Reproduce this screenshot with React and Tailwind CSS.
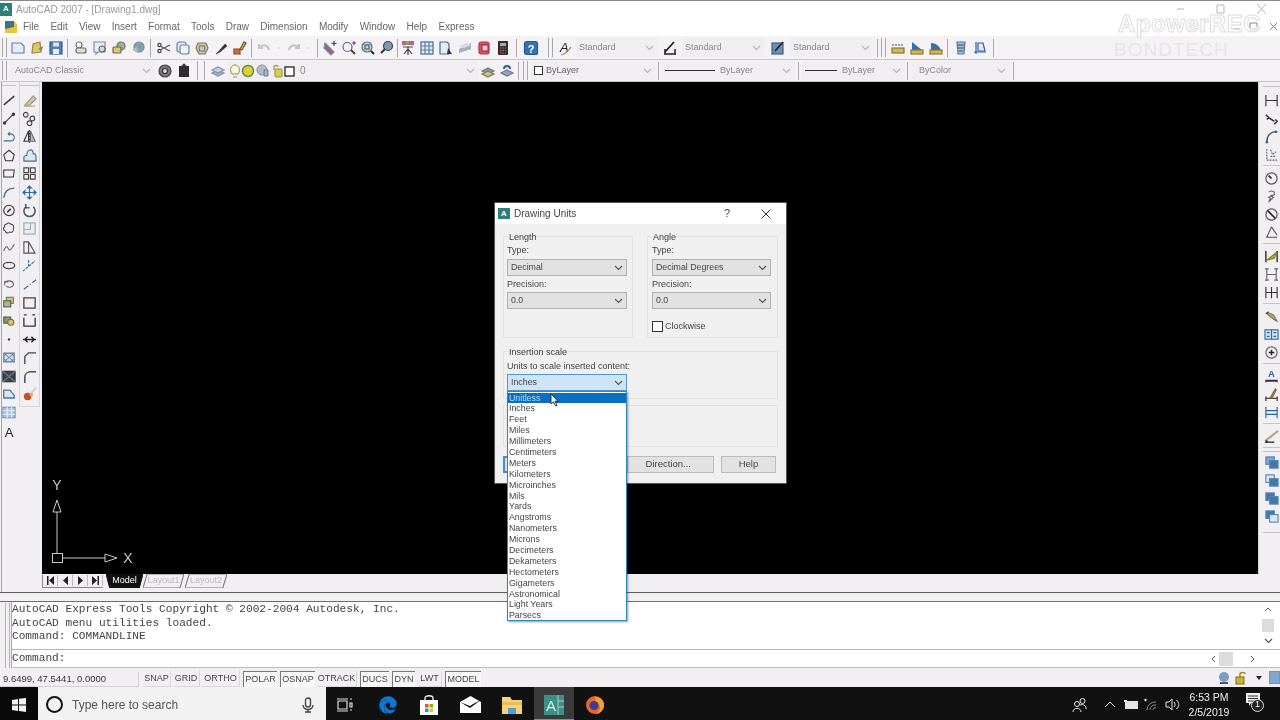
import React from 'react'
import { FaEdge } from 'react-icons/fa'

const Ic = ({ children, size = 16 }) => (
  <svg width={size} height={size} viewBox="0 0 16 16" fill="none" stroke="#444" strokeWidth="1.2">
    {children}
  </svg>
)

// top toolbar
const topA = [
  <path d="M2 3h9l3 3v7H2z" fill="#e4edf6" stroke="#5b83ad" />,
  <><path d="M3 13l1-9 7-2 1 10z" fill="#e2c568" stroke="#9a8a4a" /><path d="M9 9l5-3-1 5z" fill="#6d9a58" stroke="none" /></>,
  <><rect x="2" y="2" width="12" height="12" fill="#4f7fb8" stroke="#36608f" /><rect x="5" y="2.5" width="6" height="4" fill="#dfe8f2" stroke="none" /><rect x="5" y="9" width="6" height="5" fill="#eef" stroke="none" /></>,
]
const topB = [
  <><circle cx="6" cy="5" r="3" stroke="#777" /><rect x="3" y="8" width="10" height="5" rx="2" fill="#ddd" stroke="#666" /></>,
  <><path d="M2 2h11v10H6l-2 2v-2H2z" fill="#e6edf4" stroke="#7b8ea3" /><circle cx="10" cy="9" r="3" fill="#cfd9e3" stroke="#666" /></>,
  <><circle cx="10" cy="6" r="4" fill="#9ab48a" stroke="#6c7a66" /><rect x="2" y="7" width="8" height="6" rx="1" fill="#e2c568" stroke="#666" /></>,
  <><circle cx="9" cy="7" r="5" fill="#7fa3bf" stroke="#7a8a96" /><path d="M2 10l5-3 1 6z" fill="#b8b8b8" stroke="none" /><path d="M8 4l4 2-2 3z" fill="#7da65a" stroke="none" /></>,
]
const topC = [
  <><path d="M2 5l12 6M2 11l12-6" stroke="#555" /><circle cx="3.5" cy="5" r="1.6" fill="#fff" /><circle cx="3.5" cy="11" r="1.6" fill="#fff" /></>,
  <><rect x="2" y="2" width="9" height="10" rx="2" fill="#dfe8f2" stroke="#6184aa" /><rect x="5" y="5" width="9" height="9" rx="2" fill="#edf2f8" stroke="#6184aa" /></>,
  <><path d="M4 3h8l2 5-3 6H5L2 8z" fill="#d9c67c" stroke="#777" /><rect x="5.5" y="6" width="5" height="5" fill="#bcd0df" stroke="#6f8192" /></>,
  <path d="M3 14l3-3 6-7 2 2-7 6z" fill="#333" stroke="#333" strokeWidth=".6" />,
  <><path d="M2 9h6v5H2z" fill="#d76b3a" stroke="#8b4a2b" /><path d="M8 9l4-7 2 1-4 7z" fill="#d9b64c" stroke="#6b5a2a" /></>,
]
const undo = <path d="M13 10c-1-5-6-6-9-3l-1 1m0-4v4h4" stroke="#c4c4c4" strokeWidth="2" />
const redo = <path d="M3 10c1-5 6-6 9-3l1 1m0-4v4H9" stroke="#c4c4c4" strokeWidth="2" />
const dash = <path d="M7 8h2" stroke="#c4c4c4" />
const topD = [
  <><path d="M3 3l9 9-3 3-7-7z" fill="#a35d78" stroke="#7a8fa6" /><path d="M12 1v5M9.5 3.5h5" stroke="#444" /></>,
  <><circle cx="6.5" cy="7" r="4.5" fill="#eef" stroke="#666" /><path d="M10 10l4 4" strokeWidth="2" /><path d="M13 1v4M11 3h4" stroke="#555" /></>,
  <><circle cx="7" cy="7" r="5" fill="#c8d6e3" stroke="#666" /><path d="M11 11l3 3" stroke="#222" strokeWidth="2" /><rect x="5" y="5" width="4" height="4" stroke="#3d5f85" /></>,
  <><circle cx="9" cy="6" r="4.5" fill="#7d9ab5" stroke="#444" /><path d="M6 9l-4 4" stroke="#333" strokeWidth="2" /></>,
]
const topE = [
  <><rect x="2" y="1" width="12" height="4" fill="#c65a9b" stroke="none" /><rect x="6" y="1" width="3" height="4" fill="#7fb04f" stroke="none" /><path d="M3 7h10M8 7v8M4 14l4-5 4 5" stroke="#444" /></>,
  <><rect x="2" y="2" width="12" height="12" fill="#e4ecf3" stroke="#3f6c9b" /><path d="M6 2v12M10 2v12M2 6h12M2 10h12" stroke="#5b7fa3" /></>,
  <><path d="M2 2h7l2 2v10H2z" fill="#e8eef4" stroke="#3f6c9b" /><path d="M10 8l4 6h-5z" fill="#333" stroke="none" /></>,
  <><path d="M2 9l12-6v6l-12 4z" fill="#9fb0bf" stroke="none" /><path d="M2 6l7-3 5 2-7 3z" fill="#d4dbe2" stroke="none" /></>,
  <><rect x="3" y="2" width="10" height="12" rx="2" fill="#d94f63" stroke="#b03a50" /><rect x="6" y="5" width="6" height="6" fill="#f2d5da" stroke="#a33" /></>,
  <><rect x="3" y="1" width="10" height="14" rx="1" fill="#2e2e2e" stroke="none" /><rect x="5" y="3" width="6" height="3" fill="#aaa" stroke="none" /><path d="M5 8h6M5 10.5h6M5 13h6" stroke="#c66" strokeDasharray="1.5 1" /></>,
]
const help = <><rect x="1.5" y="1.5" width="13" height="13" rx="2" fill="#2f73b5" stroke="#255b91" /><text x="8" y="12.5" textAnchor="middle" fontSize="11" fontWeight="700" fill="#fff" stroke="none">?</text></>
const dimIcons = [
  <><path d="M2 5h12" stroke="#445" strokeDasharray="2 1" /><rect x="2" y="8" width="12" height="5" fill="#d7b64f" stroke="#8c7a34" /></>,
  <><path d="M3 10V2l10 8z" fill="#2f73a8" stroke="none" /><rect x="2" y="10" width="12" height="4" fill="#d7b64f" stroke="#8c7a34" /></>,
  <><path d="M3 10V3c5 0 8 3 10 7z" fill="#2f73a8" stroke="none" /><rect x="2" y="10" width="12" height="4" fill="#d7b64f" stroke="#8c7a34" /></>,
]
const dimIcons2 = [
  <><path d="M4 2h8l-1 12H5z" fill="#a8bccf" stroke="#5b7a97" /><path d="M5 5h6M5 8h6M6 11h4" stroke="#33506c" /></>,
  <><path d="M4 14V2M2 12h12" stroke="#2a62a0" /><path d="M6 3h5l2 8H6z" fill="#e4edf6" stroke="#2a62a0" /></>,
]

// draw toolbar, left column
const draw = [
  <path d="M2 13L14 3" stroke="#333" strokeWidth="1.5" />,
  <><path d="M2 14L14 2" stroke="#222" /><circle cx="3" cy="13" r="1.4" fill="#222" /><circle cx="13" cy="3" r="1.4" fill="#222" /></>,
  <path d="M2 13h8c3 0 4-2 4-4s-2-4-4-4H7m2-2L7 5l2 2" stroke="#3f6c9b" />,
  <path d="M8 2l6 5-2 7H4L2 7z" stroke="#333" />,
  <path d="M2 4h12l-1 8H2z" stroke="#333" />,
  <path d="M2 14C3 7 7 3 14 3" stroke="#3f5f80" strokeWidth="1.6" />,
  <><circle cx="8" cy="8" r="6" stroke="#333" /><path d="M6 10l4-4" stroke="#333" strokeWidth="2" /></>,
  <path d="M5 3c2-2 4-1 5 0 3 0 4 3 3 5 1 3-2 5-4 4-2 2-5 1-5-1-3-1-3-4-1-5-1-2 1-3 2-3z" stroke="#444" />,
  <path d="M2 12c2-6 4-6 5-3s3 3 7-5" stroke="#666" />,
  <ellipse cx="8" cy="8" rx="6.5" ry="3.5" stroke="#444" strokeWidth="1.5" />,
  <path d="M3 6c2-3 9-3 10 1s-5 5-8 3M3 9V5h4" stroke="#666" />,
  <><rect x="5" y="2" width="8" height="7" fill="#e0c25d" stroke="#5a7a9a" /><rect x="2" y="6" width="8" height="7" fill="#9fc084" stroke="#555" /></>,
  <><rect x="2" y="4" width="8" height="7" fill="#7ea16b" stroke="#555" /><circle cx="10" cy="10" r="3.5" fill="#e0c25d" stroke="#666" /></>,
  <circle cx="8" cy="8" r="1.4" fill="#444" stroke="none" />,
  <><path d="M2 3h12v10H2z" fill="#cfdbe6" stroke="#5c7c9c" /><path d="M2 3l12 10M14 3L2 13M6 3l-4 4M10 3l4 4M6 13l-4-4M10 13l4-4" stroke="#4f7294" strokeWidth=".9" /></>,
  <><rect x="1" y="2" width="14" height="12" fill="#3b4248" stroke="#2a2f33" /><path d="M1 2l14 12M15 2L1 14" stroke="#778" /></>,
  <path d="M2 3h7l5 6v3H2z" fill="#dbe5ee" stroke="#52769a" strokeWidth="1.5" />,
  <><rect x="1" y="2" width="14" height="12" fill="#a9c3e0" stroke="#6c93bb" /><path d="M1 6h14M1 10h14M6 2v12M11 2v12" stroke="#e8f0f8" /></>,
  <text x="8" y="14" textAnchor="middle" fontSize="15" fill="#222" stroke="none">A</text>,
]

// modify toolbar, right column
const modify = [
  <><path d="M3 13L12 3l3 3-7 7z" fill="#d9c79a" stroke="#999" /><path d="M2 14h12" stroke="#b98" /></>,
  <><circle cx="4" cy="4" r="2.5" /><circle cx="11" cy="8" r="2.5" /><circle cx="8" cy="13" r="2.5" /></>,
  <><path d="M7 2L2 13h5z" stroke="#333" /><path d="M9 2l5 11H9z" fill="#bbb" stroke="#666" /><path d="M8 1v14" strokeDasharray="2 1" /></>,
  <path d="M2 14V10c0-2 3-2 3-2 0-4 2-6 4-6s3 2 3 4c2 0 3 2 3 4v4z" fill="#dbe5ee" stroke="#3f6c9b" />,
  <path d="M2 2h5v5H2zM9 2h5v5H9zM2 9h5v5H2zM9 9h5v5H9z" stroke="#444" />,
  <path d="M8 1v14M1 8h14M8 1L6 3h4zM8 15l-2-2h4zM1 8l2-2v4zM15 8l-2-2v4z" stroke="#2f6ba5" fill="#2f6ba5" />,
  <path d="M12 4a6 6 0 1 1-8 0M4 1v4h4" stroke="#555" strokeWidth="1.7" />,
  <><rect x="2" y="2" width="12" height="12" fill="#e9eef3" stroke="#9aa" /><path d="M2 9h7V2" stroke="#aab" /></>,
  <path d="M2 2h5l7 12H2zM7 2v12" stroke="#555" />,
  <path d="M1 14L14 3M7 2v8" stroke="#3a6da0" strokeDasharray="3 1" />,
  <path d="M2 13L15 3" stroke="#3a6da0" strokeDasharray="6 2 1 2" />,
  <path d="M2 14V3h12v11z" stroke="#444" strokeWidth="1.4" />,
  <path d="M2 5v9h12V5M2 2h3M11 2h3" stroke="#333" strokeWidth="1.4" />,
  <path d="M1 8h14M6 5l-3 3 3 3M10 5l3 3-3 3" stroke="#222" strokeWidth="1.4" />,
  <path d="M3 15V7l4-4h8" stroke="#444" strokeWidth="1.4" />,
  <path d="M3 15V9c0-4 3-6 6-6h6" stroke="#34556f" strokeWidth="1.6" />,
  <><circle cx="6" cy="10" r="4" fill="#c4502e" stroke="none" /><circle cx="10" cy="8" r="2" fill="#e4b13f" stroke="none" /><path d="M10 6l5-5" stroke="#ccc" strokeWidth="2" /></>,
]

// dimension toolbar
const grayS = '#333'
const dimA = [
  <path d="M2 2v12M14 2v12M2 8h12" stroke={grayS} />,
  <path d="M2 4l3 3-2 2M5 7l6 4M11 14l3-3-2-2" stroke={grayS} strokeWidth="1.6" />,
  <><path d="M3 14C3 7 7 3 13 3" stroke="#555" strokeWidth="1.5" /><circle cx="3" cy="14" r="1.4" fill="#2f6ba5" stroke="none" /><circle cx="13" cy="3" r="1.4" fill="#2f6ba5" stroke="none" /></>,
  <path d="M3 2v12M3 14h11M7 3l2 5 4-3M7 10h6" stroke="#666" strokeDasharray="2 1" />,
]
const dimB = [
  <><circle cx="8" cy="8" r="6" stroke="#555" /><path d="M5 5l3 3" stroke="#222" strokeWidth="1.8" /></>,
  <path d="M5 3c4-2 7 0 6 3L8 8l2 1-5 5 2-4-2-1 4-3" stroke="#666" />,
  <><circle cx="8" cy="8" r="6" stroke="#555" /><path d="M4 4l8 8" stroke="#222" strokeWidth="1.8" /></>,
  <path d="M2 13h12M8 2L3 13M8 2l6 9" stroke="#555" />,
]
const dimC = [
  <><path d="M2 2v12M14 2v12" stroke="#222" strokeWidth="1.4" /><path d="M3 12L13 4l-2 6z" fill="#b5b034" stroke="#857f20" /></>,
  <path d="M3 2v12M13 2v12M1 2h4M11 2h4M1 14h4M11 14h4M3 8h10" stroke="#666" />,
  <path d="M2 2v12M8 2v12M14 2v12M2 8h12" stroke="#333" />,
]
const dimD = [
  <><path d="M4 4l6 2 4 7-4-2-6-5z" fill="#b5b034" stroke="#777" /><path d="M2 5l3-2" stroke="#333" /></>,
  <><rect x="1" y="3" width="14" height="10" fill="#d4e1ed" stroke="#2f6ba5" /><path d="M8 3v10M3 6h3M3 10h3M10 6h3M10 10h3" stroke="#2f6ba5" /></>,
  <><circle cx="8" cy="8" r="6" stroke="#666" /><path d="M5 8h6M8 5v6" stroke="#222" strokeWidth="1.6" /></>,
]
const dimE = [
  <><path d="M2 14V12h12v2M2 13h12" stroke="#333" /><text x="8" y="9" textAnchor="middle" fontSize="10" fontWeight="700" fill="#2f5f95" stroke="none">A</text></>,
  <><path d="M2 10v5M14 10v5M2 12h12" stroke="#222" /><path d="M7 11L12 2l1 1-4 8z" fill="#c8a33d" stroke="#806a2b" /></>,
  <path d="M2 2v12M14 2v12M2 6h12M2 10h12" stroke="#2a62a0" />,
]
const dimStyle = <><path d="M1 13l14-11" stroke="#b2a98a" strokeWidth="2.4" /><path d="M1 14h10M3 12v3" stroke="#222" strokeWidth="1.5" /></>
const stack = (a, b) => (
  <><rect x="2" y="2" width="9" height="8" fill={a} stroke="#5b84aa" /><rect x="6" y="6" width="9" height="8" fill={b} stroke="#5b84aa" /></>
)
const dimF = [stack('#7fa6cc', '#3e78ac'), stack('#dce8f2', '#3e78ac'), stack('#3e78ac', '#3e78ac'), stack('#3e78ac', '#dce8f2')]

const Tool = ({ icon, w = 'w-[19px]' }) => (
  <span className={`flex h-[20px] shrink-0 items-center justify-center ${w}`}>
    <Ic>{icon}</Ic>
  </span>
)

const VTool = ({ icon, h = 'h-[18px]' }) => (
  <span className={`flex shrink-0 items-center justify-center ${h}`}>
    <Ic size={15}>{icon}</Ic>
  </span>
)

const Chev = ({ color = '#9a9a9a' }) => (
  <svg width="9" height="6" viewBox="0 0 9 6" fill="none" stroke={color} strokeWidth="1.1" className="shrink-0">
    <path d="M1 1l3.5 3.5L8 1" />
  </svg>
)

const Combo = ({ w, children, bg = 'bg-[#f0eef0]' }) => (
  <div className={`flex h-[19px] shrink-0 items-center justify-between pr-[4px] pl-[3px] text-[9px] text-[#888] ${w} ${bg}`}>
    <span className="flex items-center overflow-hidden whitespace-nowrap">{children}</span>
    <Chev color="#b5b5b5" />
  </div>
)

const Grip = ({ cls = '' }) => (
  <span className={`h-[19px] w-[5px] shrink-0 border-x border-[#a8a8a8] ${cls}`} />
)
const Sep = ({ cls = 'mx-[1px]' }) => <span className={`h-[18px] w-[1px] shrink-0 bg-[#a9a9a9] ${cls}`} />
const HSep = ({ cls = 'my-[2px]' }) => <span className={`block h-[1px] shrink-0 bg-[#c4c4c4] ${cls}`} />

const DlgCombo = ({ children, w = 'w-[120px]', active = false, cls = '' }) => (
  <div
    className={`flex h-[17px] items-center justify-between border pr-[3px] pl-[3px] text-[8.8px] text-[#444] ${w} ${cls} ${
      active ? 'border-[#4a9ad8] bg-[#cfe5f7]' : 'border-[#b0b0b0] bg-[#e2e2e2]'
    }`}
  >
    <span>{children}</span>
    <Chev color="#555" />
  </div>
)

const units = ['Unitless', 'Inches', 'Feet', 'Miles', 'Millimeters', 'Centimeters', 'Meters', 'Kilometers', 'Microinches', 'Mils', 'Yards', 'Angstroms', 'Nanometers', 'Microns', 'Decimeters', 'Dekameters', 'Hectometers', 'Gigameters', 'Astronomical', 'Light Years', 'Parsecs']

const statusBtns = [
  { t: 'SNAP', w: 'w-[28px] ml-[4px]' },
  { t: 'GRID', w: 'w-[27px] ml-[2px]' },
  { t: 'ORTHO', w: 'w-[38px] ml-[2px]' },
  { t: 'POLAR', w: 'w-[34px] ml-[3px]', on: true },
  { t: 'OSNAP', w: 'w-[35px] ml-[3px]', on: true },
  { t: 'OTRACK', w: 'w-[40px] ml-[2px]' },
  { t: 'DUCS', w: 'w-[29px] ml-[3px]', on: true },
  { t: 'DYN', w: 'w-[23px] ml-[3px]', on: true },
  { t: 'LWT', w: 'w-[24px] ml-[3px]' },
  { t: 'MODEL', w: 'w-[36px] ml-[3px]', on: true },
]

const Tab = ({ w, points, fill, stroke, text, label }) => (
  <div className={`relative flex h-[14px] shrink-0 items-center justify-center text-[9px] ${w} ${text}`}>
    <svg className="absolute inset-0 h-full w-full" viewBox="0 0 40 14" preserveAspectRatio="none">
      <polygon points={points} fill={fill} stroke={stroke} />
    </svg>
    <span className="relative">{label}</span>
  </div>
)

const NavBtn = ({ d }) => (
  <span className="flex h-[11px] w-[15px] items-center justify-center border-r border-[#bbb]">
    <svg width="9" height="9" viewBox="0 0 9 9" fill="#222"><path d={d} /></svg>
  </span>
)

export default function App() {
  return (
    <div className="relative flex h-[720px] w-[1280px] flex-col overflow-hidden bg-[#f1eff2] font-['Liberation_Sans',sans-serif] blur-[0.35px]">
      {/* title bar */}
      <div className="flex h-[17px] shrink-0 items-center border-t border-[#8a8a8a] bg-white">
        <span className="flex h-[13px] w-[12px] items-center justify-center bg-[#2d7f78] text-[8px] font-bold text-white">A</span>
        <span className="ml-[4px] text-[10px] text-[#999]">AutoCAD 2007 - [Drawing1.dwg]</span>
        <svg className="ml-auto mr-[13px]" width="90" height="12" viewBox="0 0 90 12" fill="none" stroke="#b5b5b5">
          <path d="M0 6h7M40 2h7v8h-7zM80 1l9 10M89 1l-9 10" />
        </svg>
      </div>

      {/* menu bar */}
      <div className="flex h-[19px] shrink-0 items-center bg-white text-[10px] text-[#666]">
        <svg className="ml-[4px]" width="14" height="14" viewBox="0 0 14 14">
          <path d="M1 1h9l3 3v9H1z" fill="#e8c63b" />
          <path d="M1 1h9v6L1 9z" fill="#3d6f98" />
        </svg>
        <div className="ml-[5px] flex gap-[11.3px]">
          <span>File</span>
          <span>Edit</span>
          <span>View</span>
          <span>Insert</span>
          <span>Format</span>
          <span>Tools</span>
          <span>Draw</span>
          <span>Dimension</span>
          <span>Modify</span>
          <span>Window</span>
          <span>Help</span>
          <span>Express</span>
        </div>
        <svg className="ml-auto mr-[2px]" width="44" height="10" viewBox="0 0 44 10" fill="none" stroke="#888">
          <path d="M0 7h6M16 1h7v7h-7zM36 1l7 7M43 1l-7 7" />
        </svg>
      </div>

      {/* standard + styles toolbar */}
      <div className="flex h-[24px] shrink-0 items-center border-b border-[#c6c6c6] bg-[#f5f2f6]">
        <Grip cls="ml-[2px] mr-[1px]" />
        {topA.map((ic, i) => <Tool key={i} icon={ic} />)}
        <Sep cls="ml-[2px] mr-[3px]" />
        {topB.map((ic, i) => <Tool key={i} icon={ic} />)}
        <Sep cls="ml-[3px] mr-[3px]" />
        {topC.map((ic, i) => <Tool key={i} icon={ic} />)}
        <Sep cls="ml-[2px] mr-[3px]" />
        <Tool icon={undo} w="w-[17px]" />
        <Tool icon={dash} w="w-[13px]" />
        <Tool icon={redo} w="w-[17px]" />
        <Tool icon={dash} w="w-[13px]" />
        <Sep cls="mx-[2px]" />
        {topD.map((ic, i) => <Tool key={i} icon={ic} />)}
        <Sep cls="mx-[0.5px]" />
        {topE.map((ic, i) => <Tool key={i} icon={ic} />)}
        <Sep cls="mx-[4px]" />
        <Tool icon={help} />
        <Grip cls="ml-[8px] mr-[2px]" />
        <Tool icon={<><text x="3" y="12" fontSize="13" fontStyle="italic" fill="#222" stroke="none">A</text><path d="M4 15c4-1 7-3 10-8" stroke="#a86" /></>} />
        <span className="w-[2px] shrink-0" />
        <Combo w="w-[82px]">Standard</Combo>
        <Tool icon={<><path d="M2 14h12M3 14V9M13 14V9" stroke="#222" strokeWidth="1.5" /><path d="M3 12L12 2" stroke="#222" strokeWidth="1.8" /></>} w="w-[24px]" />
        <Combo w="w-[83px]">Standard</Combo>
        <Tool icon={<><rect x="2" y="3" width="11" height="11" fill="#6d8fb0" stroke="#3d5f85" /><path d="M5 11l8-9" stroke="#222" strokeWidth="1.6" /></>} w="w-[25px]" />
        <Combo w="w-[84px]">Standard</Combo>
        <Sep cls="ml-[3px] mr-[3px]" />
        <Grip cls="mr-[2px]" />
        {dimIcons.map((ic, i) => <Tool key={i} icon={ic} />)}
        <Sep cls="ml-[2px] mr-[3px]" />
        {dimIcons2.map((ic, i) => <Tool key={i} icon={ic} />)}
        <Sep cls="ml-[4px]" />
      </div>

      {/* workspaces + layers + properties toolbar */}
      <div className="flex h-[22px] shrink-0 items-center border-b border-[#c6c6c6] bg-[#f5f2f6]">
        <Grip cls="ml-[2px] mr-[2px]" />
        <Combo w="w-[146px]"><span className="ml-[3px]">AutoCAD Classic</span></Combo>
        <Tool icon={<><circle cx="8" cy="8" r="6" fill="#777" stroke="#444" /><circle cx="8" cy="8" r="2.5" fill="#ddd" stroke="#333" /></>} />
        <Tool icon={<><rect x="3" y="3" width="10" height="11" fill="#2c2c2c" stroke="none" /><path d="M6 3l2-2 2 2" fill="#2c2c2c" stroke="#444" /></>} />
        <Grip cls="ml-[4px] mr-[3px] w-[8px]" />
        <Tool icon={<><path d="M2 10l6-3 6 3-6 3z" fill="#9db4c9" stroke="#8195a8" /><path d="M2 7l6-3 6 3-6 3z" fill="#c4d3df" stroke="#8195a8" /></>} />
        <div className="flex h-[19px] w-[251px] shrink-0 items-center bg-[#f0eef0] pr-[3px] pl-[1px]">
          <svg width="72" height="16" viewBox="0 0 72 16" fill="none" className="shrink-0">
            <path d="M5 14h4M4 11c-3-4-1-9 3-9s6 5 3 9z" fill="#fff6c8" stroke="#888" />
            <circle cx="20" cy="8" r="5.5" fill="#dcd034" stroke="#5b8a4a" strokeWidth="1.4" />
            <circle cx="34" cy="7" r="5" fill="#aac0c4" stroke="#88a" />
            <path d="M36 7h4v6h-4z" fill="#9eb6c6" stroke="#778" />
            <path d="M46 7V4c0-2 4-2 4 0" stroke="#b2a83a" strokeWidth="1.4" />
            <rect x="47" y="6" width="7" height="8" rx="1" fill="#dcd034" stroke="#888" />
            <rect x="57" y="4" width="9" height="9" fill="#fff" stroke="#222" strokeWidth="1.3" />
          </svg>
          <span className="text-[10px] text-[#888]">0</span>
          <span className="ml-auto"><Chev color="#b5b5b5" /></span>
        </div>
        <Tool icon={<><path d="M2 8l6-3 6 3-6 3z" fill="#7fa2bd" stroke="#777" /><path d="M2 11l6-3 6 3-6 3z" fill="#d7c35a" stroke="#777" /></>} />
        <Tool icon={<><path d="M2 10l6-3 6 3-6 3z" fill="#8fa9c0" stroke="#777" /><path d="M5 6a3 3 0 1 1 6 0" stroke="#2f5f95" strokeWidth="2" /></>} />
        <Sep cls="ml-[2px] mr-[4px]" />
        <Grip cls="mr-[3px]" />
        <Combo w="w-[125px]">
          <span className="mr-[3px] inline-block h-[9px] w-[9px] border border-[#333] bg-white" />
          <span className="text-[#666]">ByLayer</span>
        </Combo>
        <Sep cls="ml-[2px] mr-[3px]" />
        <Combo w="w-[133px]">
          <span className="mr-[5px] inline-block h-[1px] w-[50px] bg-[#333]" />
          <span>ByLayer</span>
        </Combo>
        <Sep cls="mx-[3px]" />
        <Combo w="w-[103px]">
          <span className="mr-[5px] inline-block h-[1px] w-[32px] bg-[#333]" />
          <span>ByLayer</span>
        </Combo>
        <Sep cls="ml-[2px] mr-[3px]" />
        <Combo w="w-[99px]"><span className="ml-[5px]">ByColor</span></Combo>
        <Sep cls="ml-[3px]" />
      </div>

      {/* drawing area with docked toolbars */}
      <div className="flex h-[510px] shrink-0">
        <div className="flex w-[42px] shrink-0 gap-[3px] pl-[1px]">
          <div className="flex h-full w-[15px] flex-col border-l border-[#a5a5a5]">
            <HSep cls="mt-[3px] mb-[5px]" />
            {draw.map((ic, i) => <VTool key={i} icon={ic} h="h-[18.4px]" />)}
          </div>
          <div className="flex h-[325px] w-[21px] flex-col border-x border-b border-[#d6d6d6]">
            <HSep cls="mt-[3px] mb-[5px]" />
            {modify.map((ic, i) => <VTool key={i} icon={ic} h="h-[18.4px]" />)}
          </div>
        </div>

        <div className="flex min-w-0 flex-1 flex-col">
          <div className="relative flex-1 bg-black">
            <svg className="absolute bottom-[7px] left-[6px]" width="96" height="92" viewBox="0 0 96 92" fill="none" stroke="#c8c8c8">
              <path d="M9 78V37M9 25l-4 12h8zM14 83h43M57 79v8l12-4z" />
              <rect x="4.500" y="78.500" width="10" height="9" />
              <text x="9" y="15" textAnchor="middle" fontSize="14" fill="#c8c8c8" stroke="none">Y</text>
              <text x="80" y="88" textAnchor="middle" fontSize="14" fill="#c8c8c8" stroke="none">X</text>
            </svg>
          </div>
          <div className="h-[18px] shrink-0">
            <div className="flex items-center">
              <div className="flex h-[13px] items-center border-b border-l border-[#888]">
                <NavBtn d="M1 0h1.500v9H1zM8 0v9L3 4.500z" />
                <NavBtn d="M7 0v9L2 4.500z" />
                <NavBtn d="M2 0v9l5-4.500z" />
                <NavBtn d="M8 0H6.500v9H8zM1 0v9l5-4.500z" />
              </div>
              <Tab w="ml-[3px] w-[37px]" points="0,0 40,0 36,14 4,14" fill="#111" stroke="#111" text="text-white" label="Model" />
              <Tab w="w-[41px]" points="0,14 4,0 40,0 36,14" fill="#f1eff2" stroke="#777" text="text-[#bbb]" label="Layout1" />
              <Tab w="ml-[1px] w-[42px]" points="0,14 4,0 40,0 36,14" fill="#f1eff2" stroke="#777" text="text-[#bbb]" label="Layout2" />
            </div>
          </div>
        </div>

        <div className="flex w-[22px] shrink-0 flex-col items-center">
          <div className="flex h-[493px] w-full flex-col border-l border-[#d8d8d8] pl-[4px]">
            <HSep cls="mt-[4px] mb-[4px]" />
            {dimA.map((ic, i) => <VTool key={i} icon={ic} />)}
            <HSep cls="mt-[2px] mb-[3px]" />
            {dimB.map((ic, i) => <VTool key={i} icon={ic} />)}
            <HSep cls="mt-[2px] mb-[3px]" />
            {dimC.map((ic, i) => <VTool key={i} icon={ic} />)}
            <HSep cls="mt-[2px] mb-[3px]" />
            {dimD.map((ic, i) => <VTool key={i} icon={ic} />)}
            <HSep cls="mt-[2px] mb-[3px]" />
            {dimE.map((ic, i) => <VTool key={i} icon={ic} />)}
            <HSep cls="mt-[2px] mb-[3px]" />
            <VTool icon={dimStyle} />
            <HSep cls="mt-[2px]" />
            <HSep cls="mt-[3px] mb-[1px]" />
            {dimF.map((ic, i) => <VTool key={i} icon={ic} />)}
            <HSep cls="mt-[7px]" />
          </div>
        </div>
      </div>

      {/* splitter */}
      <div className="h-[10px] shrink-0 border-y border-t-[#5f5f5f] border-b-[#6f6f6f] bg-[#f2f0f3]" />

      {/* command window */}
      <div className="flex h-[66px] shrink-0 bg-white">
        <div className="flex w-[11px] shrink-0 justify-center bg-[#f1eff2] pt-[1px] pl-[3px]">
          <span className="h-full w-[5px] border-x border-[#b5b5b5]" />
        </div>
        <div className="flex min-w-0 flex-1 flex-col border-l border-[#aaa] border-b border-b-[#bdbdbd] font-['Liberation_Mono',monospace] text-[11.15px] leading-[13.500px] text-[#444]">
          <div className="flex h-[48px] shrink-0 border-b border-[#b8b8b8]">
            <div className="flex-1 pt-[1px]">
              <div>AutoCAD Express Tools Copyright © 2002-2004 Autodesk, Inc.</div>
              <div>AutoCAD menu utilities loaded.</div>
              <div>Command: COMMANDLINE</div>
            </div>
            <div className="mr-[6px] flex w-[12px] flex-col items-center justify-between py-[5px]">
              <svg width="8" height="5" viewBox="0 0 8 5" fill="none" stroke="#555"><path d="M1 4l3-3 3 3" /></svg>
              <span className="h-[13px] w-[12px] bg-[#dcdcdc]" />
              <Chev color="#555" />
            </div>
          </div>
          <div className="flex min-h-0 flex-1 items-center justify-between pt-[1px]">
            <span>Command:</span>
            <div className="mr-[25px] flex w-[44px] items-center">
              <svg width="5" height="8" viewBox="0 0 5 8" fill="none" stroke="#555"><path d="M4 1L1 4l3 3" /></svg>
              <span className="ml-[3px] h-[14px] w-[14px] bg-[#dcdcdc]" />
              <svg className="ml-auto" width="5" height="8" viewBox="0 0 5 8" fill="none" stroke="#555"><path d="M1 1l3 3-3 3" /></svg>
            </div>
          </div>
        </div>
      </div>

      {/* status bar */}
      <div className="flex h-[19px] shrink-0 items-end text-[9px] text-[#444]">
        <span className="flex h-[15px] w-[139px] items-center border-r border-b border-[#d0d0d0] pl-[3px] text-[9.5px] text-[#333]">9.6499, 47.5441, 0.0000</span>
        {statusBtns.map(b => (
          <span
            key={b.t}
            className={`flex h-[16px] shrink-0 items-center justify-center pt-[1px] ${b.w} ${
              b.on ? 'border-t border-l border-[#777] bg-[#f8f8f8]' : 'border-r border-b border-[#d8d8d8]'
            }`}
          >
            {b.t}
          </span>
        ))}
        <div className="ml-auto flex items-center self-center">
          <svg width="14" height="14" viewBox="0 0 14 14"><circle cx="7" cy="6" r="5" fill="#7d9ec4" /><path d="M3 11h8v2H3z" fill="#556" /></svg>
          <svg className="ml-[3px]" width="14" height="14" viewBox="0 0 14 14" fill="none"><path d="M6 6V3c0-2 5-2 5 0" stroke="#a8871f" strokeWidth="1.5" /><rect x="2" y="6" width="8" height="7" fill="#c9b52c" stroke="#7c6d17" /></svg>
          <svg className="ml-[8px]" width="6" height="4" viewBox="0 0 6 4" fill="#222"><path d="M0 0h6L3 4z" /></svg>
          <svg className="ml-[7px]" width="11" height="13" viewBox="0 0 11 13"><rect width="11" height="13" fill="#7ea7d0" stroke="#5a84ad" /></svg>
        </div>
      </div>

      {/* windows taskbar */}
      <div className="flex h-[33px] shrink-0 items-center bg-[#111] text-white">
        <div className="flex h-full w-[38px] shrink-0 items-center justify-center bg-[#0a0a0a] pt-[2px]">
          <svg width="14" height="14" viewBox="0 0 14 14" fill="#f2f2f2">
            <path d="M0 2l6-1v5.500H0zM7 .8L14 0v6.500H7zM0 7.500h6V13l-6-1zM7 7.500h7V14l-7-1z" />
          </svg>
        </div>
        <div className="flex h-full w-[288px] shrink-0 items-center bg-[#f2f2f2] pt-[2px] pr-[12px] pl-[8px]">
          <span className="h-[17px] w-[17px] rounded-full border-[2.5px] border-[#111]" />
          <span className="ml-[9px] text-[12px] text-[#555]">Type here to search</span>
          <svg className="ml-auto" width="12" height="16" viewBox="0 0 12 16" fill="none" stroke="#444" strokeWidth="1.4">
            <rect x="3.500" y="1" width="5" height="9" rx="2.500" />
            <path d="M1 8c0 6 10 6 10 0M6 12v3M3 15h6" />
          </svg>
        </div>
        <svg className="mt-[2px] ml-[11px]" width="16" height="14" viewBox="0 0 16 14" fill="none" stroke="#ddd" strokeWidth="1.2">
          <path d="M1 3h9v8H1zM0 1h11M0 13h11M13 1h2M13 5h2v4h-2zM13 12h2" />
        </svg>
        <span className="mt-[2px] ml-[25px] flex w-[20px] justify-center text-[18px] text-[#0a78d4]"><FaEdge /></span>
        <svg className="mt-[2px] ml-[21px]" width="20" height="20" viewBox="0 0 20 20" fill="none">
          <path d="M1 5h18v15H1z" fill="#fff" />
          <path d="M6 6V3c0-3 8-3 8 0v3" stroke="#eee" strokeWidth="1.4" />
          <path d="M6 9h3.500v3.500H6z" fill="#f25022" />
          <path d="M10.500 9H14v3.500h-3.500z" fill="#7fba00" />
          <path d="M6 13.500h3.500V17H6z" fill="#00a4ef" />
          <path d="M10.500 13.500H14V17h-3.500z" fill="#ffb900" />
        </svg>
        <svg className="mt-[2px] ml-[21px]" width="21" height="17" viewBox="0 0 21 17">
          <path d="M0 6L10.500 0 21 6v11H0z" fill="#fff" />
          <path d="M0 6l10 6L21 4l-8 4-3 2z" fill="#111" />
        </svg>
        <svg className="mt-[2px] ml-[21px]" width="20" height="18" viewBox="0 0 20 18">
          <path d="M0 1h8l2 3h10v14H0z" fill="#f6d27a" />
          <path d="M0 6h20v3H0z" fill="#e9bd5a" />
          <path d="M6 12h8v6H6z" fill="#4aa3d8" />
        </svg>
        <div className="relative ml-[12px] flex h-full w-[40px] items-center justify-center bg-[#3a3a3a] pt-[2px]">
          <svg width="20" height="20" viewBox="0 0 20 20">
            <rect width="20" height="20" fill="#3d8f88" />
            <path d="M14 0v20M14 6h6M14 12h6" stroke="#9fd0c9" />
            <text x="7" y="16" textAnchor="middle" fontSize="15" fill="#d9f2ee">A</text>
          </svg>
          <span className="absolute right-0 bottom-0 left-0 h-[1px] bg-[#8a8a8a]" />
        </div>
        <svg className="mt-[2px] ml-[12px]" width="18" height="18" viewBox="0 0 18 18">
          <circle cx="9" cy="9" r="9" fill="#e8662a" />
          <path d="M9 1c6 0 9 4 9 8s-3 9-9 9c5-2 6-6 4-10-1 2-3 2-3 2z" fill="#f0a22e" />
          <circle cx="8" cy="9.500" r="4.500" fill="#3b3a9e" />
        </svg>
        <div className="ml-auto flex h-full items-center pt-[2px]">
          <svg width="16" height="16" viewBox="0 0 16 16" fill="none" stroke="#e5e5e5">
            <circle cx="5" cy="7" r="2.500" /><circle cx="10.500" cy="4" r="2.500" />
            <path d="M1 15c0-5 8-5 8 0M8 8c3-1 6 0 6 4" />
          </svg>
          <svg className="ml-[16px]" width="12" height="7" viewBox="0 0 12 7" fill="none" stroke="#e5e5e5"><path d="M1 6l5-5 5 5" /></svg>
          <svg className="ml-[8px]" width="14" height="9" viewBox="0 0 14 9"><rect x="1" y="1" width="13" height="8" fill="#e5e5e5" /><rect width="3" height="2" fill="#e5e5e5" /></svg>
          <svg className="ml-[6px]" width="13" height="13" viewBox="0 0 13 13" fill="none" stroke="#888">
            <path d="M3 12a8 8 0 0 1 9-8M6 12a5 5 0 0 1 6-5M9 12a2 2 0 0 1 3-2" />
            <circle cx="1.500" cy="2" r="1.200" fill="#eee" stroke="none" />
          </svg>
          <svg className="ml-[8px]" width="15" height="13" viewBox="0 0 15 13" fill="none" stroke="#e5e5e5">
            <path d="M1 4h3l3-3v11L4 9H1zM9 4c1.500 1.500 1.500 3.500 0 5M11.500 2c3 3 3 6 0 9" />
          </svg>
          <div className="ml-[6px] flex w-[46px] flex-col items-center text-[10.500px] leading-[15px] text-[#eee]">
            <span>6:53 PM</span>
            <span>2/5/2019</span>
          </div>
          <div className="relative mr-[16px] ml-[14px] h-[24px] w-[18px]">
            <svg width="15" height="14" viewBox="0 0 15 14" fill="#f2f2f2"><path d="M0 0h14v10H5l-2 3v-3H0z" /><path d="M2 3h10M2 5.500h10M2 8h7" stroke="#333" /></svg>
            <span className="absolute top-[6px] left-[5px] flex h-[13px] w-[13px] items-center justify-center rounded-full border border-[#ddd] bg-[#222] text-[9px] text-white">1</span>
          </div>
        </div>
      </div>

      {/* watermark */}
      <div className="absolute top-[10px] left-[1118px] flex flex-col gap-[2px]">
        <span className="text-[24px] leading-[28px] font-bold tracking-[0.5px] text-white/70 [-webkit-text-stroke:1px_#dedade]">ApowerREC</span>
        <span className="-ml-[4px] text-[19px] leading-[20px] tracking-[1px] text-[#e9e2ea]">BONDTECH</span>
      </div>

      {/* Drawing Units dialog */}
      <div className="absolute top-[203px] left-[495px] flex h-[280px] w-[291px] flex-col bg-[#f0f0f0] text-[9px] text-[#444] shadow-[0_0_0_1px_#555]">
        <div className="flex h-[21px] shrink-0 items-center bg-white pr-[15px] pl-[3px]">
          <span className="flex h-[11px] w-[12px] items-center justify-center bg-[#2d7f78] text-[8px] font-bold text-white">A</span>
          <span className="ml-[4px] text-[10px]">Drawing Units</span>
          <span className="mr-[31px] ml-auto text-[11px]">?</span>
          <svg width="10" height="10" viewBox="0 0 10 10" fill="none" stroke="#333"><path d="M.5.5l9 9M9.500.5l-9 9" /></svg>
        </div>
        <div className="flex flex-col px-[8px] pt-[12px]">
          <div className="flex justify-between">
            <div className="flex h-[102px] w-[130px] flex-col border border-[#e2e2e2] pl-[3px]">
              <span className="-mt-[6px] ml-[2px] h-[13px] leading-[13px]">Length</span>
              <span className="h-[12px] leading-[12px]">Type:</span>
              <DlgCombo cls="mt-[3px]">Decimal</DlgCombo>
              <span className="mt-[2px] h-[12px] leading-[12px]">Precision:</span>
              <DlgCombo cls="mt-[2px]">0.0</DlgCombo>
            </div>
            <div className="flex h-[102px] w-[131px] flex-col border border-[#e2e2e2] pl-[4px]">
              <span className="-mt-[6px] ml-[1px] h-[13px] leading-[13px]">Angle</span>
              <span className="h-[12px] leading-[12px]">Type:</span>
              <DlgCombo w="w-[119px]" cls="mt-[3px]">Decimal Degrees</DlgCombo>
              <span className="mt-[2px] h-[12px] leading-[12px]">Precision:</span>
              <DlgCombo w="w-[119px]" cls="mt-[2px] border-[#8aa8c8]">0.0</DlgCombo>
              <div className="mt-[11px] flex items-center">
                <span className="h-[11px] w-[11px] border border-[#333] bg-white" />
                <span className="ml-[2px]">Clockwise</span>
              </div>
            </div>
          </div>
          <div className="mt-[13px] flex h-[48px] flex-col border border-[#e2e2e2] pl-[3px]">
            <span className="-mt-[6px] ml-[2px] h-[13px] leading-[13px]">Insertion scale</span>
            <span className="mt-[1px] h-[12px] leading-[12px]">Units to scale inserted content:</span>
            <DlgCombo active cls="mt-[2px]">Inches</DlgCombo>
          </div>
          <div className="mt-[6px] h-[42px] border border-[#e2e2e2]" />
          <div className="mt-[9px] flex h-[17px] items-stretch text-[9.5px]">
            <span className="w-[36px] border-2 border-[#3c8fd6] bg-[#e2e2e2]" />
            <span className="ml-[88px] flex w-[87px] items-center justify-end border border-[#bcbcbc] bg-[#e2e2e2] pr-[22px]">Direction...</span>
            <span className="ml-[7px] flex w-[55px] items-center justify-center border border-[#bcbcbc] bg-[#e2e2e2]">Help</span>
          </div>
        </div>
      </div>

      {/* open units dropdown */}
      <div className="absolute top-[391px] left-[507px] flex h-[230px] w-[120px] flex-col border border-[#2b86c5] bg-white pt-[0.500px] text-[8.8px] leading-[10.900px] text-[#444] shadow-[1px_1px_2px_rgba(0,0,0,0.4)]">
        {units.map((u, i) => (
          <span key={u} className={`h-[10.900px] pl-[1px] ${i === 0 ? 'bg-[#0a6fc2] text-[#b8dcf5]' : ''}`}>{u}</span>
        ))}
      </div>

      {/* mouse pointer */}
      <svg className="absolute top-[393px] left-[550px]" width="10" height="14" viewBox="0 0 10 14">
        <path d="M1 1v10l2.500-2 2 4 1.500-.7-2-4H8z" fill="#fff" stroke="#222" strokeWidth=".9" />
      </svg>
    </div>
  )
}
